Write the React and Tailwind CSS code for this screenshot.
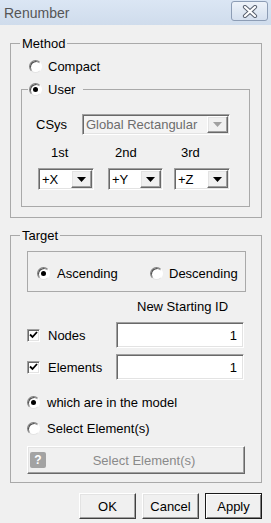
import React from "react";

const sunken =
  "border border-t-[#a0a0a0] border-l-[#a0a0a0] border-r-white border-b-white shadow-[inset_1px_1px_#696969,inset_-1px_-1px_#e3e3e3]";
const raised =
  "border border-t-white border-l-white border-r-[#696969] border-b-[#696969] shadow-[inset_-1px_-1px_#a0a0a0,inset_1px_1px_#e3e3e3]";

function Radio({ checked }) {
  return (
    <span className="w-[13px] h-[13px] shrink-0 rounded-full bg-white border border-t-[#808080] border-l-[#808080] border-r-white border-b-[#e3e3e3] shadow-[inset_1px_1px_#505050] flex items-center justify-center">
      {checked && <span className="w-[5px] h-[5px] rounded-full bg-black" />}
    </span>
  );
}

function Check() {
  return (
    <span className={`w-[13px] h-[13px] shrink-0 bg-white flex items-center justify-center ${sunken}`}>
      <svg width="9" height="8" viewBox="0 0 9 8">
        <path d="M1 3.5 L3.5 6 L8 1" fill="none" stroke="#000" strokeWidth="1.8" />
      </svg>
    </span>
  );
}

function Arrow({ color = "#000" }) {
  return (
    <svg width="9" height="5" viewBox="0 0 9 5">
      <path d="M0 0 H9 L4.5 5 Z" fill={color} />
    </svg>
  );
}

function Drop({ value, width }) {
  return (
    <div className={`h-[22px] bg-white flex items-center ${sunken} ${width}`}>
      <span className="flex-1 pl-[3px]">{value}</span>
      <span className={`w-[21px] h-[18px] mr-[1px] bg-[#f0f0f0] flex items-center justify-center ${raised}`}>
        <Arrow />
      </span>
    </div>
  );
}

function Btn({ children, primary }) {
  return (
    <button
      className={
        "w-[57px] h-[26px] bg-[#f0f0f0] text-[13px] " +
        (primary
          ? "border border-[#1a1a1a] shadow-[inset_1px_1px_#fff,inset_-1px_-1px_#808080]"
          : raised + " !border-r-[#404040] !border-b-[#404040]")
      }
    >
      {children}
    </button>
  );
}

export default function App() {
  return (
    <div
      className="w-[271px] h-[523px] bg-[#f0f0f0] text-black text-[13px] leading-[15px] overflow-hidden"
      style={{ fontFamily: '"Liberation Sans", Arial, sans-serif' }}
    >
      {/* title bar */}
      <div className="h-[25px] bg-gradient-to-b from-[#dbe6f4] to-[#cfdcec] flex items-start">
        <span className="pl-[4px] pt-[5px] text-[14px] leading-[16px] text-[#555]">Renumber</span>
        <button className="ml-auto mt-[1px] mr-[3px] w-[37px] h-[20px] rounded-[3px] border border-[#8d9db5] bg-gradient-to-b from-[#eef3f9] to-[#d4dfee] flex items-center justify-center">
          <svg width="16" height="13" viewBox="0 0 16 13">
            <path d="M3 2 L13 11 M13 2 L3 11" stroke="#5a6270" strokeWidth="4.2" strokeLinecap="round" />
            <path d="M3 2 L13 11 M13 2 L3 11" stroke="#fff" strokeWidth="2.2" strokeLinecap="round" />
          </svg>
        </button>
      </div>

      {/* Method */}
      <fieldset className="mt-[11px] ml-[10px] w-[252px] border border-[#a9a9a9] pb-[10px]">
        <legend className="ml-[9px] px-[2px]">Method</legend>
        <div className="mt-[8px] ml-[18px] flex items-center gap-[6px] h-[15px]">
          <Radio />
          <span>Compact</span>
        </div>

        <fieldset className="mt-[8px] ml-[10px] w-[229px] border border-[#a9a9a9] pb-[16px]">
          <legend className="ml-[6px] pl-[1px] pr-[8px]">
            <span className="flex items-center gap-[6px]">
              <Radio checked />
              <span>User</span>
            </span>
          </legend>
          <div className="mt-[17px] pl-[14px] flex items-center">
            <span className="w-[46px]">CSys</span>
            <div className={`w-[148px] h-[21px] bg-[#f4f4f4] flex items-center ${sunken}`}>
              <span className="flex-1 pl-[3px] text-[#6d6d6d]">Global Rectangular</span>
              <span className={`w-[21px] h-[17px] mr-[1px] bg-[#f0f0f0] flex items-center justify-center ${raised}`}>
                <Arrow color="#a0a0a0" />
              </span>
            </div>
          </div>
          <div className="mt-[10px] pl-[16px] flex">
            <div className="w-[56px] flex flex-col">
              <span className="pl-[13px]">1st</span>
              <div className="mt-[8px]">
                <Drop value="+X" width="w-[56px]" />
              </div>
            </div>
            <div className="ml-[14px] w-[55px] flex flex-col">
              <span className="pl-[7px]">2nd</span>
              <div className="mt-[8px]">
                <Drop value="+Y" width="w-[55px]" />
              </div>
            </div>
            <div className="ml-[11px] w-[56px] flex flex-col">
              <span className="pl-[7px]">3rd</span>
              <div className="mt-[8px]">
                <Drop value="+Z" width="w-[56px]" />
              </div>
            </div>
          </div>
        </fieldset>
      </fieldset>

      {/* Target */}
      <fieldset className="mt-[10px] ml-[10px] w-[252px] border border-[#a9a9a9] pb-[8px]">
        <legend className="ml-[9px] px-[2px]">Target</legend>
        <div className="mt-[8px] ml-[16px] w-[219px] h-[41px] border border-[#a9a9a9] flex items-center pt-[3px] pl-[9px]">
          <div className="w-[113px] flex items-center gap-[7px]">
            <Radio checked />
            <span>Ascending</span>
          </div>
          <div className="flex items-center gap-[6px]">
            <Radio />
            <span>Descending</span>
          </div>
        </div>
        <div className="mt-[7px] pl-[126px]">New Starting ID</div>
        <div className="mt-[8px] pl-[16px] flex items-center">
          <Check />
          <span className="ml-[8px] w-[68px]">Nodes</span>
          <div className={`w-[128px] h-[26px] bg-white flex items-center justify-end pr-[6px] ${sunken}`}>1</div>
        </div>
        <div className="mt-[6px] pl-[16px] flex items-center">
          <Check />
          <span className="ml-[8px] w-[68px]">Elements</span>
          <div className={`w-[128px] h-[26px] bg-white flex items-center justify-end pr-[6px] ${sunken}`}>1</div>
        </div>
        <div className="mt-[15px] pl-[16px] flex items-center gap-[7px] h-[15px]">
          <Radio checked />
          <span>which are in the model</span>
        </div>
        <div className="mt-[11px] pl-[16px] flex items-center gap-[7px] h-[15px]">
          <Radio />
          <span>Select Element(s)</span>
        </div>
        <div className="mt-[10px] ml-[16px]">
          <div className={`w-[218px] h-[28px] bg-[#f0f0f0] flex items-center pl-[2px] ${raised}`}>
            <span className="w-[16px] h-[16px] rounded-[2px] bg-[#a3a3a3] text-white text-[12px] font-bold flex items-center justify-center">
              ?
            </span>
            <span className="flex-1 text-center text-[#8a8a8a] pr-[2px]">Select Element(s)</span>
          </div>
        </div>
      </fieldset>

      {/* footer */}
      <div className="mt-[10px] pr-[9px] flex justify-end gap-[6px]">
        <Btn>OK</Btn>
        <Btn>Cancel</Btn>
        <Btn primary>Apply</Btn>
      </div>
    </div>
  );
}
